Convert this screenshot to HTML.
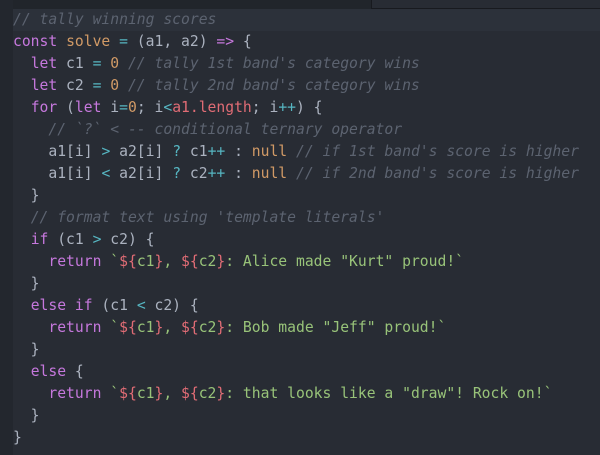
<!DOCTYPE html>
<html><head><style>
body{margin:0;width:600px;height:455px;background:#282c34;overflow:hidden;position:relative;font-family:"DejaVu Sans Mono","Liberation Mono",monospace;font-size:14.7px}
.gut{position:absolute;left:0;top:0;width:13px;height:455px;background:#23272e}
.top{position:absolute;left:0;top:0;width:600px;height:9px;background:#21252b}
.tab{position:absolute;left:371px;top:-1px;width:240px;height:8px;background:#282c34;border:1px solid #181a1f}
.hl{position:absolute;left:13px;top:9px;width:587px;height:22px;background:#2c313a}
pre{position:absolute;left:13px;top:9px;margin:0;font:inherit;line-height:22px;color:#abb2bf;white-space:pre}
.k{color:#c678dd}.c{color:#5c6370;font-style:italic}.f{color:#d19a66}.n{color:#d19a66}.o{color:#56b6c2}.r{color:#e06c75}.s{color:#98c379}
</style></head><body>
<div class="top"></div><div class="tab"></div><div class="gut"></div><div class="hl"></div>
<pre><span class="c">// tally winning scores</span>
<span class="k">const</span> <span class="f">solve</span> <span class="o">=</span> (a1, a2) <span class="k">=&gt;</span> {
  <span class="k">let</span> c1 <span class="o">=</span> <span class="n">0</span> <span class="c">// tally 1st band's category wins</span>
  <span class="k">let</span> c2 <span class="o">=</span> <span class="n">0</span> <span class="c">// tally 2nd band's category wins</span>
  <span class="k">for</span> (<span class="k">let</span> i<span class="o">=</span><span class="n">0</span>; i<span class="o">&lt;</span><span class="r">a1.length</span>; i<span class="o">++</span>) {
    <span class="c">// `?` &lt; -- conditional ternary operator</span>
    a1[i] <span class="o">&gt;</span> a2[i] <span class="o">?</span> c1<span class="o">++</span> : <span class="n">null</span> <span class="c">// if 1st band's score is higher</span>
    a1[i] <span class="o">&lt;</span> a2[i] <span class="o">?</span> c2<span class="o">++</span> : <span class="n">null</span> <span class="c">// if 2nd band's score is higher</span>
  }
  <span class="c">// format text using 'template literals'</span>
  <span class="k">if</span> (c1 <span class="o">&gt;</span> c2) {
    <span class="k">return</span> <span class="s">`</span><span class="r">${</span><span class="s">c1</span><span class="r">}</span><span class="s">, </span><span class="r">${</span><span class="s">c2</span><span class="r">}</span><span class="s">: Alice made "Kurt" proud!`</span>
  }
  <span class="k">else if</span> (c1 <span class="o">&lt;</span> c2) {
    <span class="k">return</span> <span class="s">`</span><span class="r">${</span><span class="s">c1</span><span class="r">}</span><span class="s">, </span><span class="r">${</span><span class="s">c2</span><span class="r">}</span><span class="s">: Bob made "Jeff" proud!`</span>
  }
  <span class="k">else</span> {
    <span class="k">return</span> <span class="s">`</span><span class="r">${</span><span class="s">c1</span><span class="r">}</span><span class="s">, </span><span class="r">${</span><span class="s">c2</span><span class="r">}</span><span class="s">: that looks like a "draw"! Rock on!`</span>
  }
}</pre>
</body></html>
